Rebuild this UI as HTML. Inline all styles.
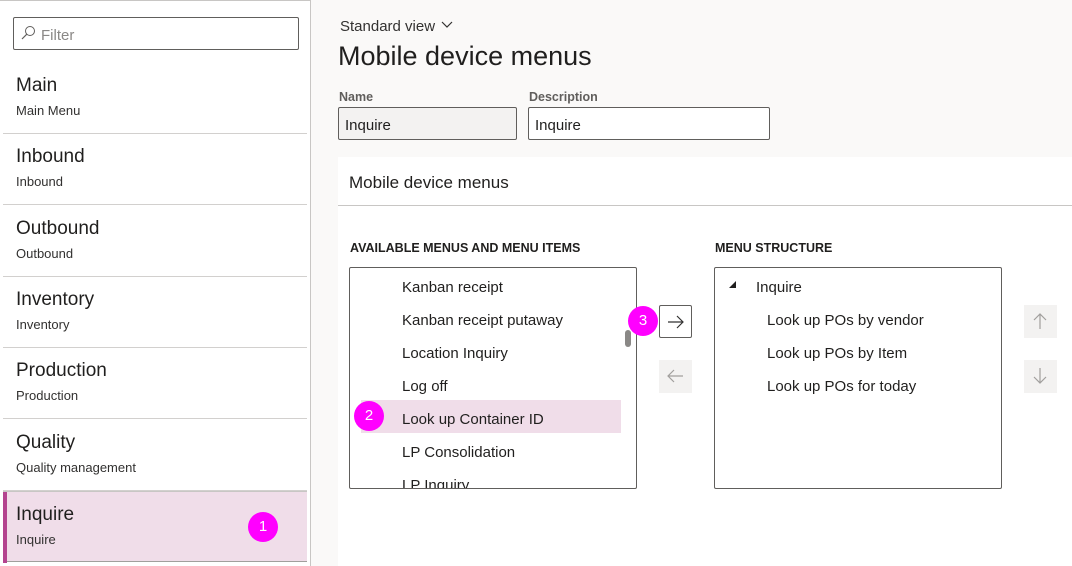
<!DOCTYPE html>
<html><head><meta charset="utf-8"><style>
*{box-sizing:border-box;margin:0;padding:0}
body{width:1072px;height:566px;overflow:hidden;background:#faf9f8;font-family:"Liberation Sans",sans-serif;color:#201f1e;position:relative}
.abs{position:absolute}
#left{left:0;top:0;width:311px;height:566px;background:#fff;border-right:1px solid #c8c6c4;border-top:1px solid #c8c6c4}
.item{position:absolute;left:3px;width:304px;height:71px;border-bottom:1px solid #d2d0ce}
.item .t{position:absolute;left:13px;top:12px;font-size:19px;color:#201f1e}
.item .s{position:absolute;left:13px;top:40px;font-size:13px;color:#323130}
.badge{position:absolute;width:30px;height:30px;border-radius:50%;background:#ff00ff;color:#fff;font-size:15px;text-align:center;line-height:30px}
.lt{position:absolute;font-size:15px;color:#201f1e}
.btn{position:absolute;width:33px;height:33px;background:#f3f2f1}
</style></head><body>
<div id="left" class="abs">
 <div class="abs" style="left:13px;top:16px;width:286px;height:33px;border:1px solid #605e5c;border-radius:2px">
  <svg class="abs" style="left:6px;top:7px" width="16" height="16" viewBox="0 0 16 16"><circle cx="10" cy="6" r="4.5" fill="none" stroke="#605e5c" stroke-width="1"/><path d="M6.8 9.2L2 14" stroke="#605e5c" stroke-width="1.2"/></svg>
  <span class="abs" style="left:27px;top:9px;font-size:15px;color:#8a8886">Filter</span>
 </div>
 <div class="item" style="top:62px"><div class="t">Main</div><div class="s">Main Menu</div></div>
 <div class="item" style="top:133px"><div class="t">Inbound</div><div class="s">Inbound</div></div>
 <div class="item" style="top:205px"><div class="t">Outbound</div><div class="s">Outbound</div></div>
 <div class="item" style="top:276px"><div class="t">Inventory</div><div class="s">Inventory</div></div>
 <div class="item" style="top:347px"><div class="t">Production</div><div class="s">Production</div></div>
 <div class="item" style="top:419px"><div class="t">Quality</div><div class="s">Quality management</div></div>
 <div class="item" style="top:490px;background:#f0dde9;border-top:1px solid #c8c6c4;border-bottom:1px solid #a19f9d"><div class="abs" style="left:0;top:0;width:4px;height:71px;background:#b4448f"></div><div class="t">Inquire</div><div class="s">Inquire</div><div class="badge" style="left:245px;top:20px">1</div></div>
</div>

<div class="abs" style="left:340px;top:18px;font-size:15px;color:#323130">Standard view <svg width="12" height="8" viewBox="0 0 12 8" style="vertical-align:2px;margin-left:2px"><path d="M1 1l5 5 5-5" fill="none" stroke="#323130" stroke-width="1.2"/></svg></div>
<div class="abs" style="left:338px;top:41px;font-size:27px;color:#201f1e">Mobile device menus</div>
<div class="abs" style="left:339px;top:90px;font-size:12.5px;color:#605e5c;font-weight:bold">Name</div>
<div class="abs" style="left:529px;top:90px;font-size:12.5px;color:#605e5c;font-weight:bold">Description</div>
<div class="abs" style="left:338px;top:107px;width:179px;height:33px;background:#f3f2f1;border:1px solid #605e5c;border-radius:2px;font-size:15px;padding:9px 6px">Inquire</div>
<div class="abs" style="left:528px;top:107px;width:242px;height:33px;background:#fff;border:1px solid #605e5c;border-radius:2px;font-size:15px;padding:9px 6px">Inquire</div>

<div class="abs" style="left:338px;top:157px;width:734px;height:409px;background:#fff">
 <div class="abs" style="left:11px;top:16px;font-size:17px">Mobile device menus</div>
 <div class="abs" style="left:0;top:48px;width:734px;height:1px;background:#c8c6c4"></div>
 <div class="abs" style="left:12px;top:84px;font-size:12.5px;font-weight:bold">AVAILABLE MENUS AND MENU ITEMS</div>
 <div class="abs" style="left:377px;top:84px;font-size:12.5px;font-weight:bold">MENU STRUCTURE</div>
</div>

<div class="abs" style="left:349px;top:267px;width:288px;height:222px;border:1px solid #605e5c;border-radius:2px;overflow:hidden;background:#fff">
 <div class="abs" style="left:11px;top:132px;width:260px;height:33px;background:#f0dde9"></div>
 <div class="lt" style="left:52px;top:11px">Kanban receipt</div>
 <div class="lt" style="left:52px;top:44px">Kanban receipt putaway</div>
 <div class="lt" style="left:52px;top:77px">Location Inquiry</div>
 <div class="lt" style="left:52px;top:110px">Log off</div>
 <div class="lt" style="left:52px;top:143px">Look up Container ID</div>
 <div class="lt" style="left:52px;top:176px">LP Consolidation</div>
 <div class="lt" style="left:52px;top:209px">LP Inquiry</div>
 <div class="abs" style="left:275px;top:62px;width:6px;height:17px;border-radius:3px;background:#8a8886"></div>
 <div class="badge" style="left:4px;top:133px">2</div>
</div>
<div class="badge" style="left:628px;top:306px">3</div>
<div class="abs" style="left:659px;top:305px;width:33px;height:33px;border:1px solid #605e5c;border-radius:2px;background:#fff"><svg class="abs" style="left:7px;top:7px" width="18" height="18" viewBox="0 0 18 18"><path d="M1 9h15M10 3l6 6-6 6" fill="none" stroke="#323130" stroke-width="1.2"/></svg></div>
<div class="btn" style="left:659px;top:360px"><svg class="abs" style="left:7px;top:7px" width="18" height="18" viewBox="0 0 18 18"><path d="M17 9H2M8 3L2 9l6 6" fill="none" stroke="#a19f9d" stroke-width="1.2"/></svg></div>

<div class="abs" style="left:714px;top:267px;width:288px;height:222px;border:1px solid #605e5c;border-radius:2px;background:#fff">
 <svg class="abs" style="left:14px;top:13px" width="8" height="8" viewBox="0 0 8 8"><path d="M7 0V7H0z" fill="#201f1e"/></svg>
 <div class="lt" style="left:41px;top:11px">Inquire</div>
 <div class="lt" style="left:52px;top:44px">Look up POs by vendor</div>
 <div class="lt" style="left:52px;top:77px">Look up POs by Item</div>
 <div class="lt" style="left:52px;top:110px">Look up POs for today</div>
</div>
<div class="btn" style="left:1024px;top:305px"><svg class="abs" style="left:7px;top:7px" width="18" height="18" viewBox="0 0 18 18"><path d="M9 17V2M3 8l6-6 6 6" fill="none" stroke="#a19f9d" stroke-width="1.2"/></svg></div>
<div class="btn" style="left:1024px;top:360px"><svg class="abs" style="left:7px;top:7px" width="18" height="18" viewBox="0 0 18 18"><path d="M9 1v15M3 10l6 6 6-6" fill="none" stroke="#a19f9d" stroke-width="1.2"/></svg></div>
</body></html>
